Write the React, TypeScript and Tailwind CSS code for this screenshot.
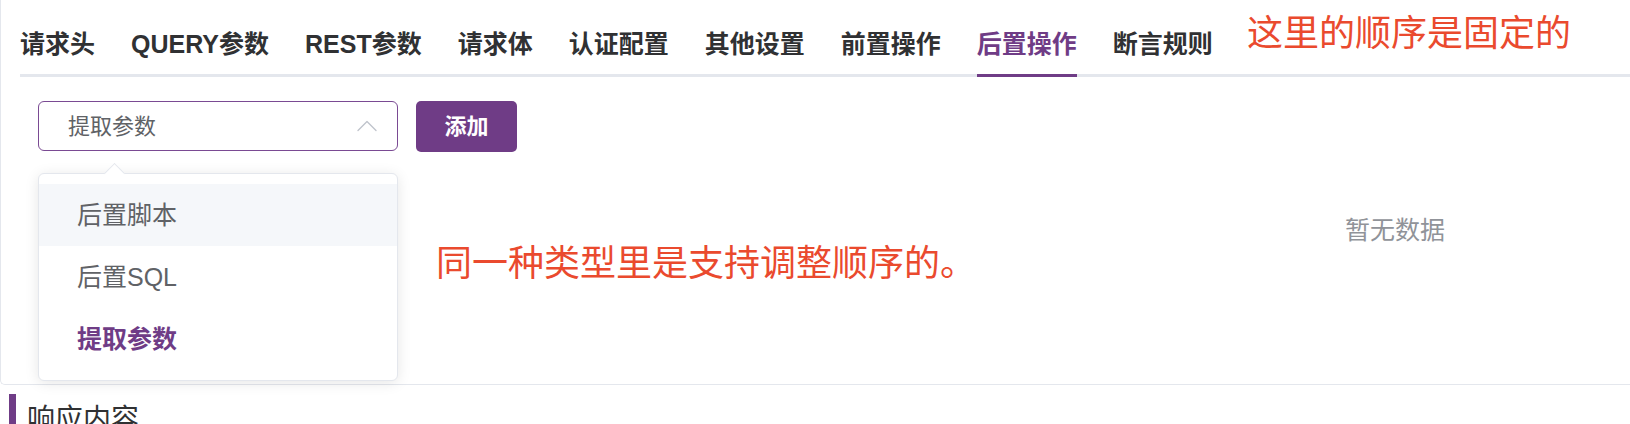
import { ChevronUp } from "lucide-react";

const tabs = [
  "请求头",
  "QUERY参数",
  "REST参数",
  "请求体",
  "认证配置",
  "其他设置",
  "前置操作",
  "后置操作",
  "断言规则",
];

const activeTab = "后置操作";

const options = [
  { label: "后置脚本", hover: true, selected: false },
  { label: "后置SQL", hover: false, selected: false },
  { label: "提取参数", hover: false, selected: true },
];

const font = "font-['Liberation_Sans','Noto_Sans_CJK_SC',sans-serif]";

const App = () => {
  return (
    <div className={`relative w-[1630px] h-[424px] overflow-hidden bg-white ${font}`}>
      {/* Card */}
      <div className="relative h-[385px] border-l border-b border-[#e4e7ed] rounded-bl-[5px]">
        {/* Tabs */}
        <div className="ml-[19px] pt-[14px] flex gap-[36px] border-b-[3px] border-[#e4e7ed]">
          {tabs.map((tab) => (
            <div
              key={tab}
              className={`relative h-[60px] leading-[60px] text-[25px] font-bold whitespace-nowrap ${
                tab === activeTab ? "text-[#6f3c86]" : "text-[#303133]"
              }`}
            >
              {tab}
              {tab === activeTab && (
                <span className="absolute left-0 right-0 -bottom-[3px] h-[3px] bg-[#6f3c86]" />
              )}
            </div>
          ))}
        </div>

        {/* Select + add */}
        <div className="pl-[37px] pt-[24px] flex items-start gap-[18px]">
          <div className="relative">
            <div className="w-[360px] h-[50px] border border-[#7a4a93] rounded-[6px] flex items-center justify-between pl-[29px] pr-[12px]">
              <span className="text-[22px] text-[#606266]">提取参数</span>
              <ChevronUp className="w-[36px] h-[36px] text-[#c0c4cc]" strokeWidth={0.9} />
            </div>

            {/* Dropdown */}
            <div className="absolute left-0 top-[72px] z-10 w-[360px] bg-white border border-[#e4e7ed] rounded-[6px] py-[10px] shadow-[0_2px_14px_0_rgba(0,0,0,0.1)]">
              <span className="absolute -top-[8px] left-[68px] w-[15px] h-[15px] rotate-45 bg-white border-l border-t border-[#e4e7ed]" />
              {options.map((o) => (
                <div
                  key={o.label}
                  className={`relative h-[62px] leading-[62px] pl-[38px] text-[25px] ${
                    o.hover ? "bg-[#f5f7fa]" : ""
                  } ${o.selected ? "text-[#6f3c86] font-bold" : "text-[#606266]"}`}
                >
                  {o.label}
                </div>
              ))}
            </div>
          </div>
          <button className="w-[101px] h-[51px] rounded-[5px] bg-[#6f3c86] text-white text-[22px] font-bold">
            添加
          </button>
        </div>

        {/* Empty table */}
        <div className="mt-[66px] flex justify-end pr-[185px]">
          <span className="text-[25px] leading-[25px] text-[#909399]">暂无数据</span>
        </div>

        {/* Annotations */}
        <div className="absolute left-[1246px] top-[16px] text-[36px] leading-[36px] text-[#ea4a2e] whitespace-nowrap">
          这里的顺序是固定的
        </div>
        <div className="absolute left-[435px] top-[246px] text-[36px] leading-[36px] text-[#ea4a2e] whitespace-nowrap">
          同一种类型里是支持调整顺序的。
        </div>
      </div>

      {/* Response section */}
      <div className="mt-[9px] ml-[9px] flex items-start gap-[11px]">
        <div className="w-[7px] h-[40px] bg-[#6f3c86]" />
        <div className="mt-[12px] text-[28px] leading-[28px] text-[#303133]">响应内容</div>
      </div>
    </div>
  );
};

export default App;
